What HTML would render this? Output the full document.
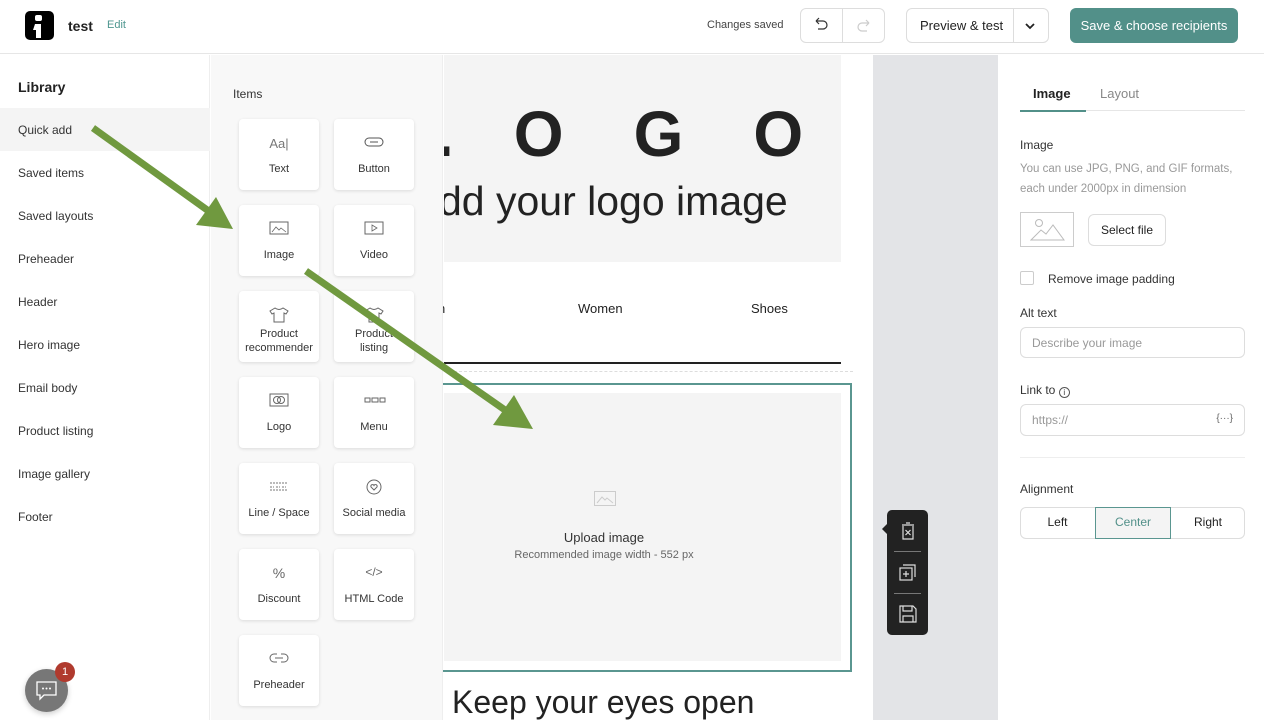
<!DOCTYPE html>
<html><head><meta charset="utf-8"><style>
*{box-sizing:border-box;margin:0;padding:0}
body{width:1264px;height:720px;overflow:hidden;position:relative;font-family:"Liberation Sans",sans-serif;color:#222;background:#fff}
.a{position:absolute}
.card{position:absolute;width:80px;height:71px;background:#fff;border-radius:4px;box-shadow:0 1px 3px rgba(0,0,0,.12);text-align:center;font-size:11px;color:#333}
.card svg{position:absolute;left:30px;top:16px}
.card span{position:absolute;left:0;right:0;top:43px;line-height:14px}
.nav{position:absolute;left:18px;font-size:12px;color:#333}
.btn{position:absolute;border:1px solid #ddd;border-radius:6px;background:#fff}
</style></head><body>
<!-- header -->
<div class="a" style="left:0;top:0;width:1264px;height:54px;border-bottom:1px solid #e6e6e6;background:#fff"></div>
<div class="a" style="left:25px;top:11px;width:29px;height:29px;background:#000;border-radius:5px"></div>
<div class="a" style="left:35px;top:15px;width:7px;height:6px;background:#fff;border-radius:2px"></div>
<svg class="a" style="left:25px;top:11px" width="29" height="29"><path d="M10 13h6v14h-5v-8h-3z" fill="#fff"/></svg>
<div class="a" style="left:68px;top:18px;font-size:14px;font-weight:bold">test</div>
<div class="a" style="left:107px;top:19px;font-size:11px;color:#4f9790">Edit</div>
<div class="a" style="left:707px;top:19px;font-size:11px;color:#444">Changes saved</div>
<div class="btn" style="left:800px;top:8px;width:85px;height:35px"></div>
<div class="a" style="left:842px;top:9px;width:1px;height:33px;background:#ddd"></div>
<svg class="a" style="left:812px;top:17px" width="18" height="16"><path d="M4 4h7a4 4 0 0 1 0 8H6M4 4l3-3M4 4l3 3" fill="none" stroke="#333" stroke-width="1.2"/></svg>
<svg class="a" style="left:855px;top:17px" width="18" height="16"><path d="M14 6H7a4 4 0 0 0 0 8h5M14 6l-3-3M14 6l-3 3" fill="none" stroke="#ccc" stroke-width="1.2"/></svg>
<div class="btn" style="left:906px;top:8px;width:143px;height:35px"></div>
<div class="a" style="left:1013px;top:9px;width:1px;height:33px;background:#ddd"></div>
<div class="a" style="left:920px;top:18px;font-size:13px;color:#222">Preview &amp; test</div>
<svg class="a" style="left:1025px;top:22px" width="10" height="8"><path d="M1 2l4 4 4-4" fill="none" stroke="#222" stroke-width="1.8"/></svg>
<div class="a" style="left:1070px;top:8px;width:168px;height:35px;background:#529089;border-radius:6px;color:#fff;font-size:13px;text-align:center;line-height:35px">Save &amp; choose recipients</div>

<!-- canvas -->
<div class="a" style="left:444px;top:55px;width:429px;height:665px;background:#fff"></div>
<div class="a" style="left:444px;top:55px;width:397px;height:207px;background:#f4f4f4;overflow:hidden">
 <div class="a" style="left:-8px;top:42px;font-size:64px;font-weight:bold;white-space:nowrap;word-spacing:0">.<span style="margin-left:60px">O</span><span style="margin-left:70px">G</span><span style="margin-left:70px">O</span></div>
 <div class="a" style="left:-5px;top:123px;font-size:41px;white-space:nowrap">dd your logo image</div>
</div>
<div class="a" style="left:438px;top:301px;font-size:13px">n</div>
<div class="a" style="left:578px;top:301px;font-size:13px">Women</div>
<div class="a" style="left:751px;top:301px;font-size:13px">Shoes</div>
<div class="a" style="left:444px;top:362px;width:397px;height:2px;background:#222"></div>
<div class="a" style="left:444px;top:371px;width:409px;border-top:1px dashed #ddd"></div>
<div class="a" style="left:440px;top:383px;width:412px;height:289px;border:2px solid #5a9690"></div>
<div class="a" style="left:444px;top:393px;width:397px;height:268px;background:#f4f4f4"></div>
<svg class="a" style="left:594px;top:491px" width="22" height="15"><rect x=".5" y=".5" width="21" height="14" fill="none" stroke="#ccc"/><path d="M3 12l5-6 3 3 2-2 6 5" fill="none" stroke="#ccc"/></svg>
<div class="a" style="left:444px;top:530px;width:320px;text-align:center;font-size:13px;color:#333">Upload image</div>
<div class="a" style="left:444px;top:549px;width:320px;text-align:center;font-size:11px;color:#666">Recommended image width - 552 px</div>
<div class="a" style="left:452px;top:684px;font-size:32px;white-space:nowrap">Keep your eyes open</div>
<div class="a" style="left:873px;top:55px;width:125px;height:665px;background:#e3e4e7"></div>

<!-- left sidebar -->
<div class="a" style="left:0;top:55px;width:210px;height:665px;background:#fff;border-right:1px solid #eee"></div>
<div class="a" style="left:18px;top:79px;font-size:14px;font-weight:bold;color:#222">Library</div>
<div class="a" style="left:0;top:108px;width:210px;height:43px;background:#f4f4f4"></div>
<div class="nav" style="top:123px">Quick add</div>
<div class="nav" style="top:166px">Saved items</div>
<div class="nav" style="top:209px">Saved layouts</div>
<div class="nav" style="top:252px">Preheader</div>
<div class="nav" style="top:295px">Header</div>
<div class="nav" style="top:338px">Hero image</div>
<div class="nav" style="top:381px">Email body</div>
<div class="nav" style="top:424px">Product listing</div>
<div class="nav" style="top:467px">Image gallery</div>
<div class="nav" style="top:510px">Footer</div>

<!-- items panel -->
<div class="a" style="left:211px;top:55px;width:232px;height:665px;background:#f8f8f8;border-right:1px solid #eee"></div>
<div class="a" style="left:233px;top:87px;font-size:12px;color:#333">Items</div>
<div class="card" style="left:239px;top:119px"><div class="a" style="left:0;right:0;top:17px;font-size:13px;color:#777">Aa|</div><span>Text</span></div>
<div class="card" style="left:334px;top:119px"><svg width="20" height="14"><rect x="1" y="3" width="18" height="8" rx="4" fill="none" stroke="#555"/><path d="M6 7h8" stroke="#555"/></svg><span>Button</span></div>
<div class="card" style="left:239px;top:205px"><svg width="20" height="14"><rect x="1" y="1" width="18" height="12" fill="none" stroke="#666"/><path d="M3 11l4-5 3 3 2-2 5 4" fill="none" stroke="#666" stroke-width=".8"/></svg><span>Image</span></div>
<div class="card" style="left:334px;top:205px"><svg width="20" height="14"><rect x="1" y="1" width="18" height="12" fill="none" stroke="#666"/><path d="M8 4l5 3-5 3z" fill="none" stroke="#666" stroke-width=".8"/></svg><span>Video</span></div>
<div class="card" style="left:239px;top:291px"><svg width="20" height="16"><path d="M6 1l-5 3 2 3 2-1v9h10V6l2 1 2-3-5-3q-4 3-8 0z" fill="none" stroke="#666"/></svg><span style="top:36px">Product<br>recommender</span></div>
<div class="card" style="left:334px;top:291px"><svg width="20" height="16"><path d="M6 1l-5 3 2 3 2-1v9h10V6l2 1 2-3-5-3q-4 3-8 0z" fill="none" stroke="#666"/></svg><span style="top:36px">Product<br>listing</span></div>
<div class="card" style="left:239px;top:377px"><svg width="20" height="14"><rect x="1" y="1" width="18" height="12" fill="none" stroke="#666"/><circle cx="8" cy="7" r="3.5" fill="none" stroke="#666"/><circle cx="12" cy="7" r="3.5" fill="none" stroke="#666"/></svg><span>Logo</span></div>
<div class="card" style="left:334px;top:377px"><svg width="22" height="14"><rect x="1" y="5" width="5" height="4" fill="none" stroke="#666"/><rect x="8" y="5" width="6" height="4" fill="none" stroke="#666"/><rect x="16" y="5" width="5" height="4" fill="none" stroke="#666"/></svg><span>Menu</span></div>
<div class="card" style="left:239px;top:463px"><svg width="20" height="14"><path d="M1 4h18M1 8h4M7 8h4M13 8h4M1 11h18" stroke="#777" stroke-dasharray="2 1" fill="none"/></svg><span>Line / Space</span></div>
<div class="card" style="left:334px;top:463px"><svg width="20" height="16"><circle cx="10" cy="8" r="7" fill="none" stroke="#666"/><path d="M10 11l-3-3a1.5 1.5 0 0 1 3-1.5a1.5 1.5 0 0 1 3 1.5z" fill="none" stroke="#666"/></svg><span>Social media</span></div>
<div class="card" style="left:239px;top:549px"><div class="a" style="left:0;right:0;top:16px;font-size:14px;color:#666">%</div><span>Discount</span></div>
<div class="card" style="left:334px;top:549px"><div class="a" style="left:0;right:0;top:16px;font-size:12px;color:#666">&lt;/&gt;</div><span>HTML Code</span></div>
<div class="card" style="left:239px;top:635px"><svg width="20" height="14"><path d="M8 3H5a4 4 0 0 0 0 8h3M12 3h3a4 4 0 0 1 0 8h-3M6 7h8" fill="none" stroke="#666"/></svg><span>Preheader</span></div>

<!-- toolbar -->
<div class="a" style="left:887px;top:510px;width:41px;height:125px;background:#222;border-radius:5px"></div>
<div class="a" style="left:882px;top:524px;width:0;height:0;border-top:5px solid transparent;border-bottom:5px solid transparent;border-right:5px solid #222"></div>
<div class="a" style="left:894px;top:551px;width:27px;height:1px;background:#777"></div>
<div class="a" style="left:894px;top:593px;width:27px;height:1px;background:#777"></div>
<svg class="a" style="left:898px;top:521px" width="20" height="20"><path d="M4 4h12M8 2h4M5 5v13h10V5M7.5 9l5 5M12.5 9l-5 5" fill="none" stroke="#ddd" stroke-width="1.2"/></svg>
<svg class="a" style="left:898px;top:563px" width="20" height="20"><rect x="2" y="5" width="12" height="12" fill="none" stroke="#ddd" stroke-width="1.2"/><path d="M5 2h12v12M8 8v6M5 11h6" fill="none" stroke="#ddd" stroke-width="1.2"/></svg>
<svg class="a" style="left:898px;top:604px" width="20" height="20"><path d="M2 2h13l3 3v13H2zM5 2v5h9V2M5 18v-6h10v6" fill="none" stroke="#ddd" stroke-width="1.2"/></svg>

<!-- right panel -->
<div class="a" style="left:1033px;top:86px;font-size:13px;font-weight:bold">Image</div>
<div class="a" style="left:1100px;top:86px;font-size:13px;color:#888">Layout</div>
<div class="a" style="left:1020px;top:110px;width:225px;height:1px;background:#e6e6e6"></div>
<div class="a" style="left:1020px;top:110px;width:66px;height:2px;background:#529089"></div>
<div class="a" style="left:1020px;top:138px;font-size:12px;color:#333">Image</div>
<div class="a" style="left:1020px;top:159px;font-size:11.5px;color:#999;line-height:20px">You can use JPG, PNG, and GIF formats,<br>each under 2000px in dimension</div>
<div class="a" style="left:1020px;top:212px;width:54px;height:35px;border:1px solid #ccc"></div>
<svg class="a" style="left:1030px;top:217px" width="36" height="26"><circle cx="9" cy="6" r="3.5" fill="none" stroke="#bbb"/><path d="M1 23l10-10 5 4 7-9 11 15z" fill="none" stroke="#bbb"/></svg>
<div class="btn" style="left:1088px;top:214px;width:78px;height:32px;font-size:12px;text-align:center;line-height:30px">Select file</div>
<div class="a" style="left:1020px;top:271px;width:14px;height:14px;border:1px solid #ccc;border-radius:2px"></div>
<div class="a" style="left:1048px;top:272px;font-size:12px;color:#333">Remove image padding</div>
<div class="a" style="left:1020px;top:306px;font-size:12px;color:#333">Alt text</div>
<div class="btn" style="left:1020px;top:327px;width:225px;height:31px;font-size:12px;color:#999;padding:8px 11px">Describe your image</div>
<div class="a" style="left:1020px;top:383px;font-size:12px;color:#333">Link to <span style="display:inline-block;width:11px;height:11px;border:1px solid #555;border-radius:50%;font-size:8px;text-align:center;line-height:9px;vertical-align:-1px">i</span></div>
<div class="btn" style="left:1020px;top:404px;width:225px;height:32px;font-size:12px;color:#999;padding:8px 11px">https://<span style="float:right;font-size:10px;color:#666">{···}</span></div>
<div class="a" style="left:1020px;top:457px;width:225px;height:1px;background:#eee"></div>
<div class="a" style="left:1020px;top:482px;font-size:12px;color:#333">Alignment</div>
<div class="btn" style="left:1020px;top:507px;width:225px;height:32px"></div>
<div class="a" style="left:1095px;top:507px;width:76px;height:32px;background:#f4f4f4;border:1px solid #5a9690"></div>
<div class="a" style="left:1020px;top:515px;width:75px;text-align:center;font-size:12px">Left</div>
<div class="a" style="left:1095px;top:515px;width:76px;text-align:center;font-size:12px;color:#529089">Center</div>
<div class="a" style="left:1171px;top:515px;width:74px;text-align:center;font-size:12px">Right</div>

<!-- arrows -->
<svg class="a" style="left:0;top:0" width="1264" height="720">
<g fill="#70993f" stroke="#70993f">
<line x1="93" y1="128" x2="210" y2="212" stroke-width="7"/>
<polygon points="233,229 196,225 216,197" stroke="none"/>
<line x1="306" y1="271" x2="505" y2="410" stroke-width="7"/>
<polygon points="533,429 493,425 514,395" stroke="none"/>
</g></svg>

<!-- chat -->
<div class="a" style="left:25px;top:669px;width:43px;height:43px;border-radius:50%;background:#777;box-shadow:0 2px 6px rgba(0,0,0,.2)"></div>
<svg class="a" style="left:36px;top:681px" width="22" height="20"><path d="M1 1h19v13H8l-4 4v-4H1z" fill="none" stroke="#fff" stroke-width="1.3"/><circle cx="7" cy="7.5" r="1" fill="#fff"/><circle cx="10.5" cy="7.5" r="1" fill="#fff"/><circle cx="14" cy="7.5" r="1" fill="#fff"/></svg>
<div class="a" style="left:55px;top:662px;width:20px;height:20px;border-radius:50%;background:#b03a2e;color:#fff;font-size:11px;text-align:center;line-height:20px">1</div>
</body></html>
